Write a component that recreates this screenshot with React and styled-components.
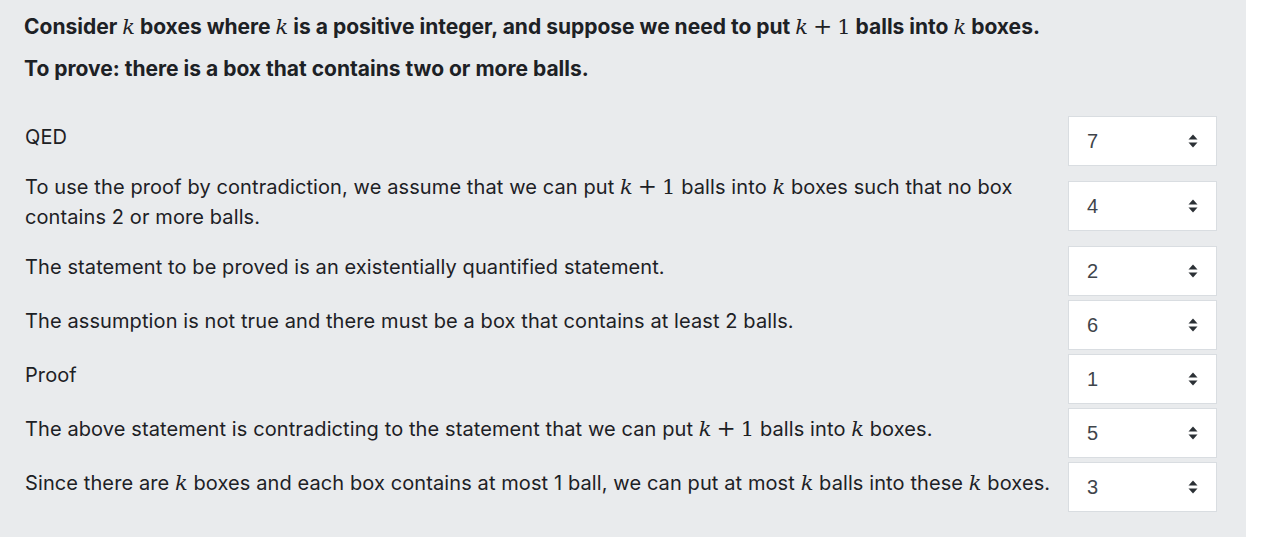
import styled, { createGlobalStyle } from "styled-components";

const Global = createGlobalStyle`
  html, body {
    margin: 0;
    padding: 0;
    background: #ffffff;
  }
  body {
    font-family: Inter, "Noto Sans", "Liberation Sans", sans-serif;
  }
`;

const Panel = styled.div`
  width: 1246px;
  min-height: 537px;
  box-sizing: border-box;
  background: #e9ebed;
  padding: 12px 0 0 0;
  color: #1d2125;
`;

const Intro = styled.p`
  margin: 0 0 12px 0;
  padding-left: 24px;
  font-size: 21px;
  line-height: 30px;
  font-weight: 700;
  letter-spacing: 0;
`;

const Table = styled.div`
  margin-top: 30px;
  display: flex;
  flex-direction: column;
`;

const Row = styled.div`
  display: grid;
  grid-template-columns: 1068px 149px;
  align-items: center;
`;

const Text = styled.div`
  padding: 4px 0 12px 25px;
  font-size: 20px;
  line-height: 30px;
  letter-spacing: 0.1px;
  color: #1d2125;
`;

const SelectCell = styled.div`
  padding: 2px 0;
`;

const Select = styled.div`
  height: 50px;
  box-sizing: border-box;
  border: 1px solid #d9dde1;
  background: #ffffff;
  display: flex;
  align-items: center;
  justify-content: space-between;
  padding: 0 18px 0 18px;
  font-size: 20px;
  color: #3f454b;
  font-family: "Liberation Sans", Arial, sans-serif;
`;

const K = styled.i`
  font-family: "DejaVu Serif", "Liberation Serif", serif;
  font-style: italic;
  font-size: 21px;
  font-weight: 400;
  letter-spacing: 0;
  line-height: 1;
`;

const M = styled.span`
  font-family: "DejaVu Serif", "Liberation Serif", serif;
  font-size: 21px;
  font-weight: 400;
  letter-spacing: 0;
  line-height: 1;
`;

const Op = styled(M)`
  font-size: 23px;
  margin: 0 5px;
`;

const Kp1 = () => (
  <span>
    <K>k</K>
    <Op>+</Op>
    <M>1</M>
  </span>
);

const Arrows = () => (
  <svg width="10" height="14" viewBox="0 0 10 14">
    <path d="M5 0.5 L9.5 5.5 L0.5 5.5 Z" fill="#2b3035" />
    <path d="M5 13.5 L9.5 8.5 L0.5 8.5 Z" fill="#2b3035" />
  </svg>
);

const rows = [
  { value: "7", text: <>QED</> },
  {
    value: "4",
    text: (
      <>
        To use the proof by contradiction, we assume that we can put <Kp1 />{" "}
        balls into <K>k</K> boxes such that no box contains 2 or more balls.
      </>
    ),
  },
  {
    value: "2",
    text: <>The statement to be proved is an existentially quantified statement.</>,
  },
  {
    value: "6",
    text: (
      <>The assumption is not true and there must be a box that contains at least 2 balls.</>
    ),
  },
  { value: "1", text: <>Proof</> },
  {
    value: "5",
    text: (
      <>
        The above statement is contradicting to the statement that we can put{" "}
        <Kp1 /> balls into <K>k</K> boxes.
      </>
    ),
  },
  {
    value: "3",
    text: (
      <>
        Since there are <K>k</K> boxes and each box contains at most 1 ball, we
        can put at most <K>k</K> balls into these <K>k</K> boxes.
      </>
    ),
  },
];

export default function App() {
  return (
    <>
      <Global />
      <Panel>
        <Intro>
          Consider <K>k</K> boxes where <K>k</K> is a positive integer, and
          suppose we need to put <Kp1 /> balls into <K>k</K> boxes.
        </Intro>
        <Intro>To prove: there is a box that contains two or more balls.</Intro>
        <Table>
          {rows.map((r, i) => (
            <Row key={i}>
              <Text>{r.text}</Text>
              <SelectCell>
                <Select>
                  <span>{r.value}</span>
                  <Arrows />
                </Select>
              </SelectCell>
            </Row>
          ))}
        </Table>
      </Panel>
    </>
  );
}
